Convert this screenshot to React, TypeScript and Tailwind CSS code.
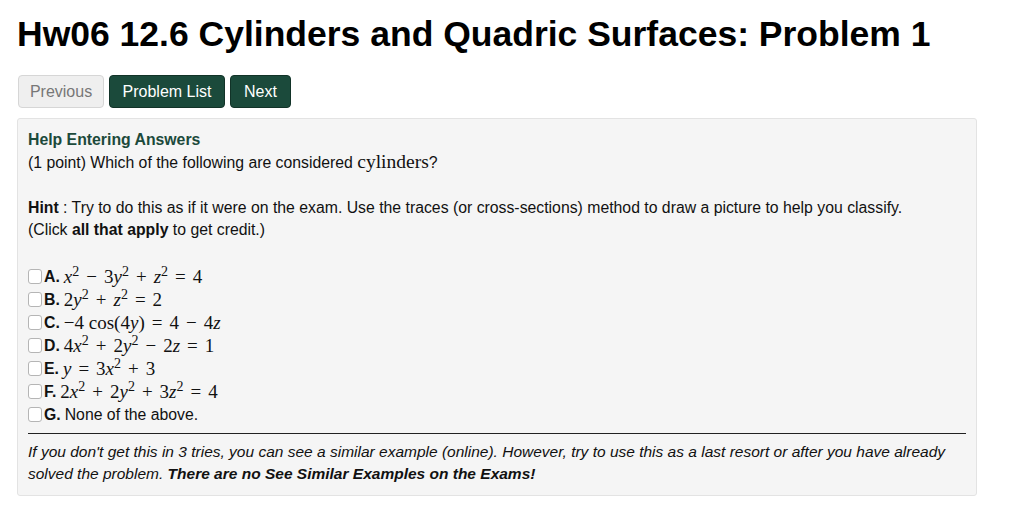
import React from "react";

const sans = { fontFamily: '"Liberation Sans", Arial, sans-serif' };
const serif = { fontFamily: '"Liberation Serif", "Times New Roman", serif' };

function V({ children }: { children: React.ReactNode }) {
  return <i>{children}</i>;
}

function Sup({ children }: { children: React.ReactNode }) {
  return <sup className="text-[14px]">{children}</sup>;
}

// operator with thick spacing like MathJax
function Op({ children }: { children: React.ReactNode }) {
  return <span className="inline-block px-[7px]">{children}</span>;
}

const options: { label: string; math: React.ReactNode }[] = [
  {
    label: "A.",
    math: (
      <>
        <V>x</V><Sup>2</Sup><Op>−</Op>3<V>y</V><Sup>2</Sup><Op>+</Op><V>z</V><Sup>2</Sup><Op>=</Op>4
      </>
    ),
  },
  {
    label: "B.",
    math: (
      <>
        2<V>y</V><Sup>2</Sup><Op>+</Op><V>z</V><Sup>2</Sup><Op>=</Op>2
      </>
    ),
  },
  {
    label: "C.",
    math: (
      <>
        −4 cos(4<V>y</V>)<Op>=</Op>4<Op>−</Op>4<V>z</V>
      </>
    ),
  },
  {
    label: "D.",
    math: (
      <>
        4<V>x</V><Sup>2</Sup><Op>+</Op>2<V>y</V><Sup>2</Sup><Op>−</Op>2<V>z</V><Op>=</Op>1
      </>
    ),
  },
  {
    label: "E.",
    math: (
      <>
        <V>y</V><Op>=</Op>3<V>x</V><Sup>2</Sup><Op>+</Op>3
      </>
    ),
  },
  {
    label: "F.",
    math: (
      <>
        2<V>x</V><Sup>2</Sup><Op>+</Op>2<V>y</V><Sup>2</Sup><Op>+</Op>3<V>z</V><Sup>2</Sup><Op>=</Op>4
      </>
    ),
  },
];

function Box() {
  return <span className="mr-[2px] h-[15px] w-[14px] shrink-0 rounded-[3px] border border-[#b5b5b5] bg-white" />;
}

export default function App() {
  return (
    <div className="min-h-[506px] bg-white px-[17px] text-[#111]" style={sans}>
      <h1 className="pt-[12px] text-[35.5px] font-bold leading-[44px] text-black">
        Hw06 12.6 Cylinders and Quadric Surfaces: Problem 1
      </h1>

      <div className="mt-[19px] flex gap-[5px] pl-px text-[16px]">
        <button className="h-[33px] w-[86px] rounded-[4px] border border-[#d6d6d6] bg-[#efefef] text-[#777]">
          Previous
        </button>
        <button className="h-[33px] w-[116px] rounded-[4px] border border-[#123328] bg-[#1b4a3b] text-white">
          Problem List
        </button>
        <button className="h-[33px] w-[61px] rounded-[4px] border border-[#123328] bg-[#1b4a3b] text-white">
          Next
        </button>
      </div>

      <div className="mt-[10px] w-[960px] rounded-[3px] border border-[#e3e3e3] bg-[#f5f5f5] p-[10px] text-[15.8px] leading-[22px]">
        <div className="font-bold text-[#1c4a3b]">Help Entering Answers</div>
        <div>
          (1 point) Which of the following are considered{" "}
          <span className="text-[19.5px]" style={serif}>
            cylinders
          </span>
          ?
        </div>
        <div className="h-[23px]" />
        <div>
          <b>Hint</b> : Try to do this as if it were on the exam. Use the traces (or cross-sections) method to draw a picture to help you classify.
        </div>
        <div>
          (Click <b>all that apply</b> to get credit.)
        </div>

        <div className="mt-[24px] flex flex-col">
          {options.map((o) => (
            <div key={o.label} className="flex h-[23px] items-center">
              <Box />
              <b className="mr-[4px]">{o.label}</b>
              <span className="text-[19px] leading-[22px]" style={serif}>
                {o.math}
              </span>
            </div>
          ))}
          <div className="flex h-[23px] items-center">
            <Box />
            <b className="mr-[4px]">G.</b>
            <span>None of the above.</span>
          </div>
        </div>

        <hr className="mt-[7px] border-t border-[#222]" />

        <p className="mt-[7px] text-[15.5px] italic">
          If you don't get this in 3 tries, you can see a similar example (online). However, try to use this as a last resort or after you have already solved the problem.{" "}
          <b>There are no See Similar Examples on the Exams!</b>
        </p>
      </div>
    </div>
  );
}
